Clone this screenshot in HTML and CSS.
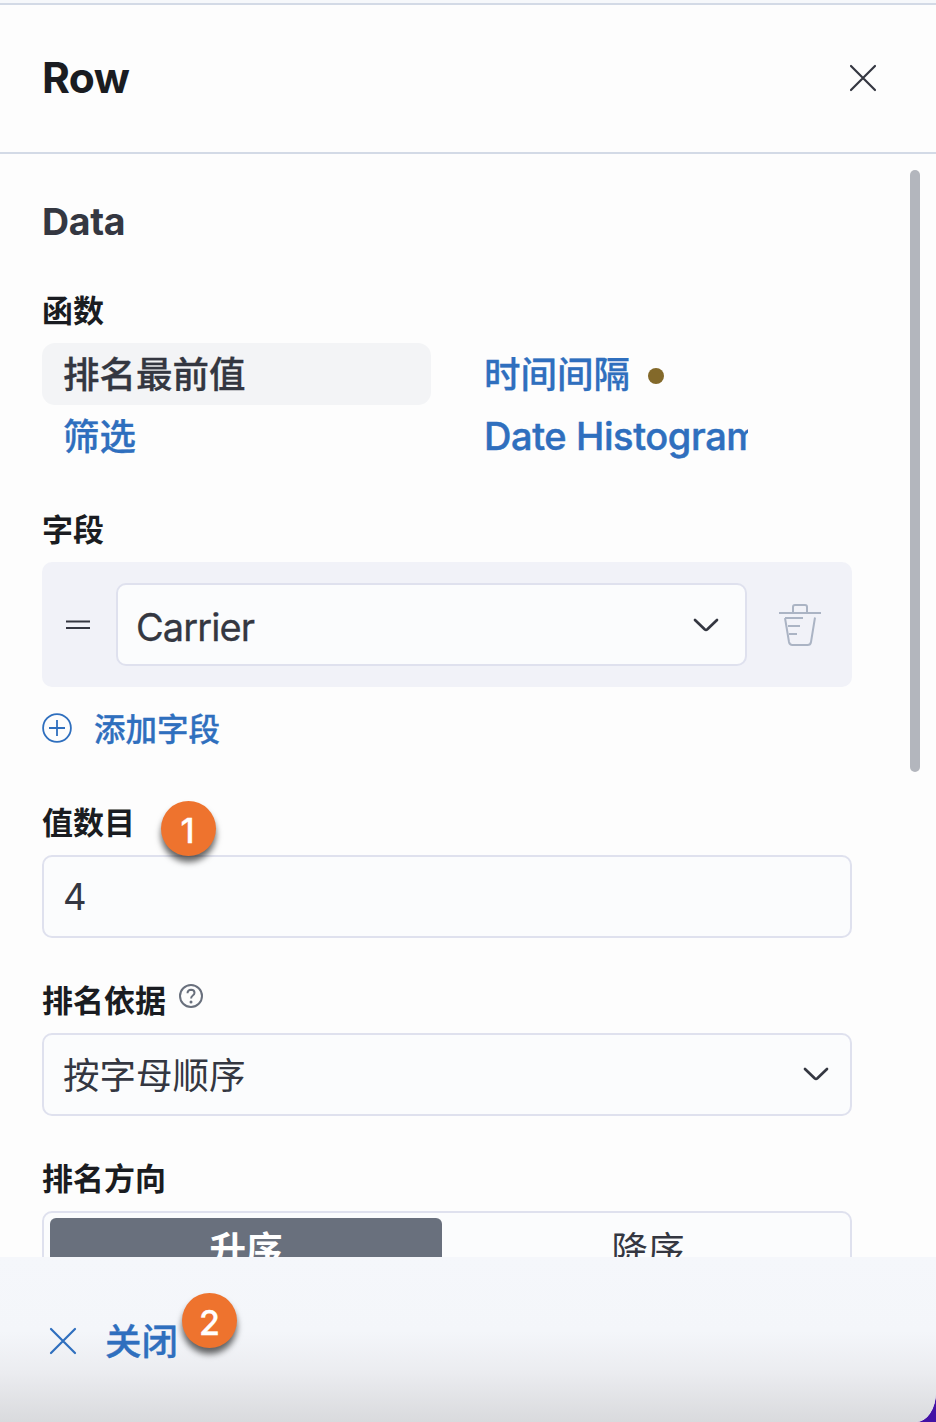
FILE: index.html
```html
<!DOCTYPE html>
<html lang="zh-CN">
<head>
    <meta charset="UTF-8">
    <title>Row</title>
    <link rel="stylesheet" href="styles.css">
</head>
<body>
<div class="flyout">
    <div class="header">
        <h2>Row</h2>
        <svg class="icon-close" width="28" height="28" viewBox="0 0 28 28"><path d="M2 2l24 24M26 2l-24 24"/></svg>
    </div>
    <div class="body">
        <h3>Data</h3>
        <div class="form-row">
            <div class="label">函数</div>
            <ul class="functions">
                <li class="selected"><span>排名最前值</span></li>
                <li><span>时间间隔</span><i class="dot"></i></li>
                <li><span>筛选</span></li>
                <li><span class="clip">Date Histogram</span></li>
            </ul>
        </div>
        <div class="form-row field-row">
            <div class="label">字段</div>
            <div class="panel">
                <svg class="icon-drag" width="24" height="10" viewBox="0 0 24 10"><path d="M0 1.5h24M0 8h24"/></svg>
                <div class="control select">
                    <span class="latin">Carrier</span>
                    <svg class="icon-arrow" width="26" height="16" viewBox="0 0 26 16"><path d="M2 3l9.600 9.200q1.400 1.200 2.800 0L24 3"/></svg>
                </div>
                <svg class="icon-trash" width="42" height="44" viewBox="0 0 42 44"><path d="M0 10h42M14 10V4q0-2 2-2h10q2 0 2 2v6M6 15h18M9 23h12M10 31h8M6 15l4 24q.6 3 3.500 3h15q3 0 3.500-3l4-24.500"/></svg>
            </div>
            <div class="add">
                <svg class="icon-plus" width="30" height="30" viewBox="0 0 30 30"><circle cx="15" cy="15" r="13.900"/><path d="M7 15h16M15 7v16"/></svg>
                <span>添加字段</span>
            </div>
        </div>
        <div class="form-row">
            <div class="label">值数目<b class="badge badge-1">1</b></div>
            <div class="control">4</div>
        </div>
        <div class="form-row">
            <div class="label">排名依据
                <svg class="icon-help" width="24" height="24" viewBox="0 0 24 24"><circle cx="12" cy="12" r="11"/><path d="M8.500 9.300q.1-3.600 3.600-3.600 3.400.1 3.400 3.100 0 1.600-1.700 2.700-1.700 1.100-1.700 2.900"/><circle class="point" cx="12" cy="18" r="1.500"/></svg>
            </div>
            <div class="control select">
                <span class="value">按字母顺序</span>
                <svg class="icon-arrow" width="26" height="16" viewBox="0 0 26 16"><path d="M2 2l9.600 9.200q1.400 1.200 2.800 0L24 2"/></svg>
            </div>
        </div>
        <div class="form-row">
            <div class="label">排名方向</div>
            <div class="control group">
                <span class="selected">升序</span>
                <span>降序</span>
            </div>
        </div>
        <div class="scrollbar"></div>
    </div>
    <div class="footer">
        <svg class="icon-close" width="28" height="28" viewBox="0 0 28 28"><path d="M2 2l24 24M26 2l-24 24"/></svg>
        <span class="close">关闭<b class="badge badge-2">2</b></span>
    </div>
</div>
</body>
</html>
```
FILE: styles.css
```css
*{
    margin: 0;
    padding: 0;
    box-sizing: border-box;
}
body{
    background: #4311a5;
    font-family: Inter, "Noto Sans CJK SC", sans-serif;
    font-size: 36.5px;
    color: #343741;
}
ul{
    list-style: none;
}
svg{
    fill: none;
    stroke: currentColor;
    stroke-width: 2;
    flex: none;
}
.flyout{
    display: flex;
    flex-direction: column;
    height: 1422px;
    background: #fdfdfd;
    border-top: 3px solid #f6f8fb;
    border-bottom-right-radius: 20px 30px;
    overflow: hidden;
}
.header{
    display: flex;
    flex: none;
    align-items: center;
    justify-content: space-between;
    height: 151px;
    padding: 0 59px 2px 42px;
    border-top: 2px solid #d3dae6;
    border-bottom: 2px solid #d3dae6;
}
.header h2{
    font-size: 42.5px;
    line-height: 50px;
    letter-spacing: -0.6px;
    color: #1a1c21;
}
.icon-close{
    stroke-width: 2.2;
    stroke-linecap: round;
}
.body{
    position: relative;
    flex: 1;
    min-height: 0;
    padding: 43px 84px 0 42px;
    overflow: hidden;
}
.body h3{
    margin-bottom: 44px;
    font-size: 37.5px;
    line-height: 50px;
    letter-spacing: -0.3px;
}
.form-row{
    margin-bottom: 43px;
}
.field-row{
    margin-bottom: 55px;
}
.label{
    display: flex;
    position: relative;
    height: 40px;
    margin-bottom: 12px;
    font-size: 31px;
    font-weight: 700;
    line-height: 40px;
    color: #1a1c21;
}
.functions{
    display: grid;
    grid-template-columns: 1fr 1fr;
    column-gap: 32px;
}
.functions li{
    display: flex;
    align-items: center;
    height: 62px;
    padding-left: 21px;
    border-radius: 13px;
    font-weight: 500;
    color: #2f6fbe;
}
.functions li.selected{
    background: #f3f4f6;
    color: #343741;
}
.functions span,
.add span,
.close{
    padding-bottom: 3px;
    -webkit-text-stroke: 0.3px currentColor;
}
.functions .clip{
    width: 264px;
    padding: 0;
    overflow: hidden;
    white-space: nowrap;
    font-size: 38px;
    letter-spacing: -0.4px;
    -webkit-text-stroke: 0.5px currentColor;
}
.dot{
    width: 16px;
    height: 16px;
    margin: 4px 0 0 18px;
    border-radius: 50%;
    background: #83692a;
}
.panel{
    display: flex;
    align-items: center;
    height: 125px;
    padding: 0 31px 0 24px;
    border-radius: 10px;
    background: #f1f2f8;
}
.panel .control{
    width: 631px;
    margin: 0 32px 0 26px;
    padding: 0 26px 0 18px;
}
.latin{
    padding-top: 4px;
    font-size: 38px;
    letter-spacing: -0.9px;
    -webkit-text-stroke: 0.3px currentColor;
}
.value{
    padding-bottom: 3px;
}
.control{
    display: flex;
    align-items: center;
    height: 83px;
    padding: 0 21px 0 19px;
    border: 2px solid #dfe1ee;
    border-radius: 10px;
    background: #fbfcfd;
}
.select{
    justify-content: space-between;
}
.icon-arrow{
    stroke-width: 2.7;
    stroke-linecap: round;
}
.icon-trash{
    color: #abb4c4;
}
.add{
    display: flex;
    align-items: center;
    gap: 22px;
    height: 40px;
    margin-top: 21px;
    font-size: 31.5px;
    font-weight: 500;
    color: #2f6fbe;
}
.icon-plus{
    stroke-width: 1.8;
}
.icon-help{
    margin: 3px 0 0 13px;
    color: #69707d;
}
.icon-help .point{
    fill: currentColor;
    stroke: none;
}
.group{
    gap: 10px;
    padding: 5px 6px;
}
.group span{
    flex: 1;
    height: 69px;
    line-height: 64px;
    border-radius: 6px;
    text-align: center;
}
.group .selected{
    background: #69707d;
    font-weight: 700;
    color: #fff;
}
.scrollbar{
    position: absolute;
    top: 16px;
    right: 16px;
    width: 10px;
    height: 602px;
    border-radius: 5px;
    background: #b3b6bd;
}
.footer{
    display: flex;
    flex: none;
    align-items: center;
    gap: 28px;
    height: 165px;
    padding: 2px 49px 0;
    background: linear-gradient(#f5f7fb 0%, #f4f6fa 45%, #ebecf0 70%, #d9dadd 100%);
    font-weight: 500;
    color: #2f6fbe;
}
.close{
    position: relative;
}
.badge{
    position: absolute;
    width: 55px;
    height: 55px;
    border-radius: 50%;
    background: #ee732e;
    box-shadow: 0 6px 6px rgba(0, 0, 0, .6);
    font: 500 34px/60px Inter, sans-serif;
    text-align: center;
    color: #fff;
    -webkit-text-stroke: 0.3px #fff;
}
.badge-1{
    top: -2px;
    left: 119px;
    padding-right: 2px;
}
.badge-2{
    top: -20px;
    left: 77px;
}
```
